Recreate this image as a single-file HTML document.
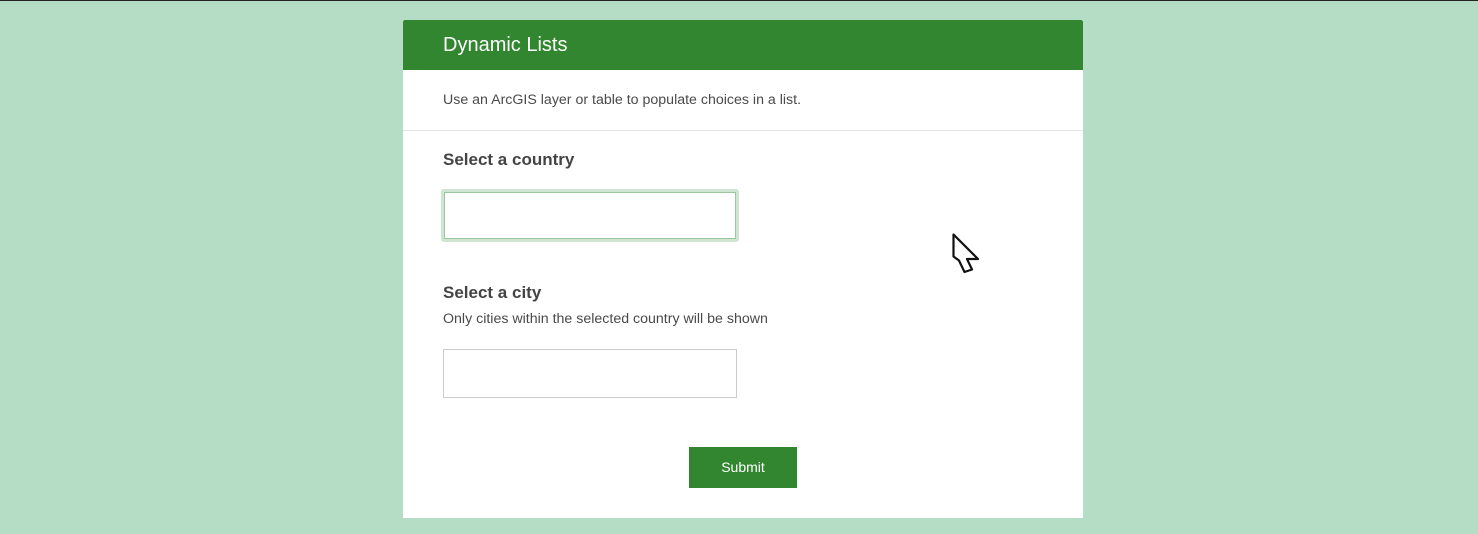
<!DOCTYPE html>
<html><head><style>
body{margin:0;width:1478px;height:534px;background:#b5dcc5;position:relative;overflow:hidden;font-family:"Liberation Sans",sans-serif}
.topline{position:absolute;left:0;top:0;width:1478px;height:1px;background:#222}
.card{position:absolute;left:403px;top:20px;width:680px;height:498px;background:#fff}
.hd{height:50px;background:#31862f;color:#fff;font-size:20px;line-height:50px;padding-left:40px;border-radius:2px 2px 0 0}
.desc{height:60px;border-bottom:1px solid #e4e4e4;font-size:14.2px;color:#4a4a4a;padding-left:40px;line-height:61px}
.lbl{position:absolute;left:40px;font-size:17px;font-weight:bold;color:#444}
.sub{position:absolute;left:40px;font-size:14.2px;color:#4a4a4a}
.in{position:absolute;left:40px;height:46px;border:1px solid #ccc;box-sizing:border-box;width:294px}
.btn{position:absolute;left:286px;top:427px;width:108px;height:41px;background:#31862f;color:#fff;font-size:14px;text-align:center;line-height:41px}
</style></head><body>
<div class="topline"></div>
<div class="card">
<div class="hd">Dynamic Lists</div>
<div class="desc">Use an ArcGIS layer or table to populate choices in a list.</div>
<div class="lbl" style="top:130px">Select a country</div>
<div class="in" style="top:169px;left:38px;width:298px;height:53px;border:3px solid #cfe5d2;border-radius:3px"><div style="border:1px solid #9bc79e;height:100%;box-sizing:border-box"></div></div>
<div class="lbl" style="top:263px">Select a city</div>
<div class="sub" style="top:291px">Only cities within the selected country will be shown</div>
<div class="in" style="top:329px;height:49px"></div>
<div class="btn">Submit</div>
</div>
<svg style="position:absolute;left:945px;top:228px" width="45" height="55"><path d="M8.5 6.5 L8.5 28.5 L14 32.5 L19.5 44 L27 41.5 L22 31 L33 31 Z" fill="#fff" stroke="#111" stroke-width="2.2" stroke-linejoin="round"/></svg>
</body></html>
